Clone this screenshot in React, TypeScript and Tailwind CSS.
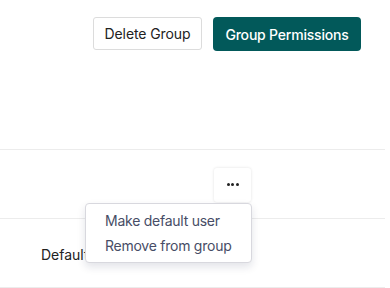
import React from "react";

const font = { fontFamily: "Inter, 'Noto Sans', sans-serif" };

export default function App() {
  return (
    <div className="relative w-[390px] h-[288px] bg-white overflow-hidden" style={font}>
      {/* Header actions */}
      <div className="w-[385px] h-[149px] flex justify-end items-start pt-[17px] pr-[24px] gap-[11px]">
        <button className="h-[33px] w-[109px] border border-[#dcdcdc] rounded-[3px] bg-white text-[14px] text-[#222] tracking-[-0.1px]">
          Delete Group
        </button>
        <button className="h-[34px] w-[148px] rounded-[4px] bg-[#02595a] text-[14px] font-medium text-white tracking-[-0.2px]">
          Group Permissions
        </button>
      </div>

      {/* Rows */}
      <div className="w-[385px] border-t border-[#ececec]">
        <div className="h-[69px] border-b border-[#ececec] flex items-start pl-[214px] pt-[18px]">
          <button className="h-[34px] w-[37px] rounded-[3px] bg-white shadow-[0_0_3px_rgba(0,0,0,0.12)] flex items-center justify-center gap-[1.5px] pb-[2px]">
            <span className="w-[3px] h-[3px] rounded-full bg-[#222]" />
            <span className="w-[3px] h-[3px] rounded-full bg-[#222]" />
            <span className="w-[3px] h-[3px] rounded-full bg-[#222]" />
          </button>
        </div>
        <div className="h-[69px] border-b border-[#ececec] flex items-center pl-[41px] pt-[2px]">
          <span className="text-[14px] text-[#222]">Default</span>
        </div>
      </div>

      {/* Dropdown menu */}
      <div className="absolute left-[85px] top-[203px] w-[167px] h-[60px] bg-white rounded-[4px] border border-[#d8d8de] shadow-[0_4px_8px_rgba(16,24,64,0.12)] flex flex-col justify-center gap-[5px] pl-[19px] pt-[1px]">
        <div className="text-[14px] text-[#474d66] leading-[20px] tracking-[-0.25px]">Make default user</div>
        <div className="text-[14px] text-[#474d66] leading-[20px] tracking-[-0.25px]">Remove from group</div>
      </div>
    </div>
  );
}
